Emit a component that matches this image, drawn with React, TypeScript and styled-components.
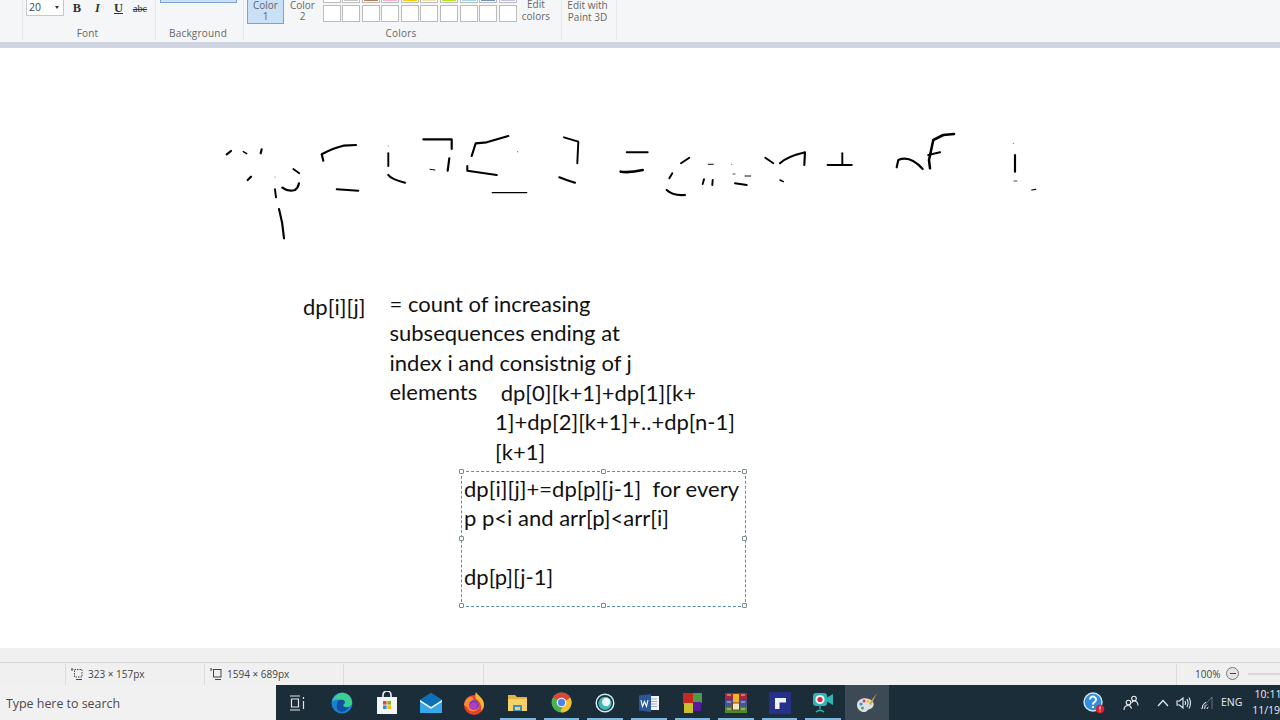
import React from "react";
import styled, { createGlobalStyle } from "styled-components";

const Global = createGlobalStyle`
  html, body { margin: 0; padding: 0; background: #fff; }
  #root { width: 1280px; height: 720px; overflow: hidden; }
`;

const Page = styled.div`
  width: 1280px; height: 720px; display: flex; flex-direction: column; overflow: hidden;
  font-family: "Open Sans", "Liberation Sans", sans-serif; color: #555;
`;

const Ribbon = styled.div`
  height: 42px; flex: none; background: #f5f6f7; display: flex; overflow: hidden; padding-left: 22px;
`;
const Group = styled.div<{ $w: number }>`
  width: ${p => p.$w}px; flex: none; height: 40px; border-left: 1px solid #e4e6e8; box-sizing: border-box;
  display: flex; flex-direction: column; justify-content: flex-end; align-items: stretch;
`;
const GroupBody = styled.div`
  display: flex; align-items: flex-start; height: 27px; overflow: hidden;
`;
const GroupLabel = styled.div`
  height: 13px; line-height: 13px; font-size: 10px; text-align: center; color: #666; letter-spacing: .2px; padding-right: 3px;
`;
const Combo = styled.div`
  width: 38px; height: 16px; margin-left: 3px; background: #fff; border: 1px solid #c6cad0; border-top: 0; box-sizing: border-box;
  font-size: 10.5px; line-height: 14px; padding-left: 2px; color: #444; display: flex; justify-content: space-between; padding-right: 4px;
`;
const Caret = styled.i`
  width: 0; height: 0; border: 2.5px solid transparent; border-top: 3px solid #333; border-bottom: 0; margin-top: 6px;
`;
const FontTools = styled.div`
  display: flex; height: 16px; align-items: center; margin-left: 3px;
`;
const FontBtn = styled.span<{ $w: number; $i?: boolean; $u?: boolean; $s?: boolean }>`
  width: ${p => p.$w}px; text-align: center; font-family: "Liberation Serif", serif; font-size: ${p => p.$s ? 10 : 12.5}px; color: #333;
  font-weight: ${p => p.$s ? 400 : 700}; font-style: ${p => p.$i ? "italic" : "normal"};
  text-decoration: ${p => p.$u ? "underline" : p.$s ? "line-through" : "none"};
`;
const BackgroundBar = styled.div`
  width: 77px; height: 3px; margin-left: 4px; background: #c9e0f7; border: 1px solid #7da2ce; border-top: 0; box-sizing: border-box;
`;
const ColorBtn = styled.div<{ $on?: boolean }>`
  width: 37px; height: 24px; box-sizing: border-box; text-align: center; font-size: 10px; line-height: 11px; color: #666;
  margin-left: ${p => p.$on ? 3 : 0}px;
  background: ${p => p.$on ? "#c9e0f7" : "transparent"}; border: 1px solid ${p => p.$on ? "#7da2ce" : "transparent"}; border-top: 0;
  flex: none;
`;
const Swatches = styled.div`
  display: grid; grid-template-columns: repeat(10, 18px); column-gap: 1.6px; row-gap: 2px; margin: -12px 0 0 1.5px; flex: none;
`;
const Swatch = styled.div<{ $c: string; $top?: boolean }>`
  width: 18px; height: ${p => p.$top ? 15 : 17}px; box-sizing: border-box; border: 1px solid #bcbcbc; background: #fff;
  box-shadow: inset 0 0 0 1px #fff; position: relative;
  &::after { content: ""; position: absolute; inset: 1px; background: ${p => p.$c}; }
`;
const EditBtn = styled.div`
  font-size: 10px; line-height: 12px; text-align: center; color: #666; flex: 1; margin-top: -1px; padding-right: 3px;
`;
const EditColors = styled(EditBtn)`
  padding-right: 6px; margin-top: -2px;
`;
const Band = styled.div`
  height: 6px; flex: none; background: #d0d5e2;
`;

const Canvas = styled.div`
  flex: none; height: 600px; background: #fff; position: relative; overflow: hidden;
`;
const Ink = styled.svg`
  position: absolute; left: 0; top: 0; width: 1280px; height: 600px;
`;
const TextBox = styled.div<{ $x: number; $y: number }>`
  position: absolute; left: ${p => p.$x}px; top: ${p => p.$y}px; white-space: pre;
  font-family: Lato, "Noto Sans", sans-serif; font-size: 22px; line-height: 29.4px; color: #111;
`;
const Selection = styled.div`
  position: absolute; left: 461px; top: 423px; width: 285px; height: 136px; box-sizing: border-box;
  border: 1px dashed #5b8db0;
`;
const Handle = styled.i<{ $l: number; $t: number }>`
  position: absolute; left: calc(${p => p.$l}% - 3px); top: calc(${p => p.$t}% - 3px); width: 5px; height: 5px;
  box-sizing: border-box; background: #fff; border: 1px solid #7b8a90; border-radius: 1px;
`;

const Gutter = styled.div`
  height: 14px; flex: none; background: #f0f0f0;
`;
const Status = styled.div`
  height: 23px; flex: none; background: #f0f0f0; border-top: 1px solid #d9d9d9; box-sizing: border-box; display: flex; align-items: stretch;
  font-size: 10px; color: #444;
`;
const Cell = styled.div<{ $w: number; $plain?: boolean }>`
  width: ${p => p.$w}px; flex: none; border-left: ${p => p.$plain ? "0" : "1px solid #dcdcdc"}; box-sizing: border-box; display: flex; align-items: center; gap: 5px; padding: 0 0 2px 5px; margin-top: 1px;
`;
const Zoom = styled.div`
  flex: 1; border-left: 1px solid #dcdcdc; display: flex; align-items: center; padding: 0 0 2px 18px; margin-top: 1px; overflow: hidden;
`;
const ZoomMinus = styled.i`
  width: 13px; height: 13px; margin-left: 6px; border-radius: 50%; border: 1px solid #777; box-sizing: border-box; background: #e4e4e4; position: relative; flex: none;
  &::after { content: ""; position: absolute; left: 2.5px; right: 2.5px; top: 5px; height: 1px; background: #444; }
`;
const Track = styled.i`
  width: 40px; height: 2px; margin-left: 9px; background: #d8d8d8; flex: none;
`;

const Taskbar = styled.div`
  height: 35px; flex: none; display: flex; background: #1c2d3a;
`;
const Search = styled.div`
  width: 276px; flex: none; background: #f1f1f1; color: #4a4a4a; font-size: 12.4px; line-height: 38px; padding-left: 6px; box-sizing: border-box;
`;
const Apps = styled.div`
  display: flex; flex: none;
`;
const AppSlot = styled.div<{ $w?: number; $on?: boolean; $active?: boolean }>`
  width: ${p => p.$w ?? 43.64}px; height: 35px; flex: none; display: flex; align-items: center; justify-content: center; position: relative;
  background: ${p => p.$active ? "#3c4a55" : "transparent"};
  ${p => p.$on ? `&::after { content: ""; position: absolute; left: 4px; right: 4px; bottom: 0; height: 2px; background: #7fb8de; }` : ""}
  svg { display: block; }
`;
const Tray = styled.div`
  margin-left: auto; color: #e8edf0; position: relative; width: 201px; flex: none; overflow: hidden;
`;
const TrayIcon = styled.div<{ $x: number }>`
  position: absolute; left: ${p => p.$x}px; top: 50%; transform: translate(-50%, -50%); display: flex;
`;
const Lang = styled.span`
  position: absolute; left: 142px; top: 11px; font-size: 10.5px; line-height: 13px;
`;
const Clock = styled.div`
  position: absolute; left: 173px; top: 1px; width: 32px; text-align: center; font-size: 10.5px; line-height: 16px; white-space: pre;
`;

const strokes: [string, number][] = [
  ["M226.7 154.3L231 151", 1.8], ["M243.3 151.7L246.7 153.7", 1.2], ["M261.7 149.3L260.7 153.3", 1.8], ["M247.7 180L251 176.7", 1.8],
  ["M293.3 169L299.3 173.3", 1.4], ["M282.3 187.7Q288 192 295 190Q298 188 299 183.3", 1.8], ["M275 189.3L276 197.3", 1.6],
  ["M279 209Q283 223 284 238.3", 1.8],
  ["M323.3 160.7L321.7 154.3Q333 148 343.3 145.7L356 145", 1.8], ["M336.7 189.3L358.3 190.7", 1.6],
  ["M388.3 153.3V166", 1.6], ["M388.3 175Q391 179 405 182.7", 1.8],
  ["M423.3 139.3H451.7V149", 1.8], ["M449.3 158.3L447.7 170.7", 1.8], ["M430 169.3L435 170", 0.8],
  ["M471.7 156L475.7 143.3L486.7 142.3L508.3 136", 1.8], ["M467.3 166V170.7L496.7 175", 1.7], ["M492.3 192.7H526.7", 1.1],
  ["M564 137.3L578.3 141.7L577.3 163.3", 1.6], ["M559.3 177.3L567.3 180.3L575 182.7", 1.8],
  ["M626.7 152.3H647.7", 1.6], ["M620.7 171.7Q630 173 642.7 170", 2.2],
  ["M681 163.3L689.3 157.7", 1.6], ["M669.3 178.3L672.3 173.3", 1.6], ["M666.7 190Q673 196 685 195", 1.8],
  ["M708.3 164.3H713.3", 0.8], ["M704 179.3L702.7 184", 1.6], ["M712.7 180L712.3 185", 1.6],
  ["M735 183.3L746.7 185", 1.6], ["M745 176H750.7", 0.8], ["M733 174H735", 0.6], ["M765.3 157.7L773.3 163.3", 1.6],
  ["M780 163.3Q786 157 805 152.3L804.3 165", 1.8], ["M780 180L783.3 181.7", 1.2],
  ["M827.7 165H851.7", 1.8], ["M842.3 153.3V165", 1.6],
  ["M896.7 167.3L898.3 160Q910 155 922.7 169", 1.8],
  ["M954 134L943.3 135L933.3 140L929 160L930 168.3", 2.1], ["M928.3 155L940 152.3", 1.8],
  ["M1015 155V171.7", 1.8], ["M1014 181H1017", 0.6], ["M1031.7 190L1035.7 189.3", 1],
];
const dots: [number, number][] = [[388.3, 98], [275, 129], [517.7, 103.7], [731.7, 116.3], [1013.3, 95.3]];

const topColors = ["#ffffff", "#c3c3c3", "#b97a57", "#ffaec9", "#ffc90e", "#efe4b0", "#b5e61d", "#99d9ea", "#7092be", "#c8bfe7"];

const Logo = {
  TaskView: () => (
    <svg width="18" height="16" viewBox="0 0 18 16" fill="none" stroke="#dfe5ea" strokeWidth="1.2">
      <path d="M1 1h10M1 15h10M2.5 4h7v8h-7z" /><path d="M14.5 2v2M14.5 6v8" />
    </svg>
  ),
  Edge: () => (
    <svg width="22" height="22" viewBox="0 0 22 22">
      <circle cx="11" cy="11" r="10.5" fill="#1b7fd4" />
      <path d="M1 10C3 3 9 0 13 1c5 1 8 5 8 10 0 2-2 4-5 4-3 0-4-1-4-2 2-1 2-4-1-5C7 7 3 7 1 10z" fill="#3ccf91" />
      <path d="M6 12c0-3 3-5 6-4 3 1 2 4 0 5 0 2 3 3 6 2-2 4-7 6-10 4-2-1-3-4-2-7z" fill="#0f4f9c" />
    </svg>
  ),
  Store: () => (
    <svg width="22" height="24" viewBox="0 0 22 24">
      <path d="M7 6V4a4 4 0 0 1 8 0v2" fill="none" stroke="#eef1f3" strokeWidth="1.6" />
      <path d="M1 6h20v17H1z" fill="#f2f4f5" />
      <rect x="7" y="10" width="3.6" height="3.6" fill="#e6492d" /><rect x="11.4" y="10" width="3.6" height="3.6" fill="#7fba00" />
      <rect x="7" y="14.4" width="3.6" height="3.6" fill="#1f9be0" /><rect x="11.4" y="14.4" width="3.6" height="3.6" fill="#ffb900" />
    </svg>
  ),
  Mail: () => (
    <svg width="24" height="22" viewBox="0 0 24 22">
      <path d="M1 8L12 1l11 7v13H1z" fill="#2196df" />
      <path d="M1 8L12 1l11 7-11 7z" fill="#0f6fb5" />
      <path d="M1 8l11 7 11-7v2l-11 7-11-7z" fill="#f2f8fc" />
      <path d="M1 10l11 7 11-7v11H1z" fill="#35a8ea" />
    </svg>
  ),
  Firefox: () => (
    <svg width="22" height="24" viewBox="0 0 22 24">
      <circle cx="11" cy="14" r="10" fill="#e8402f" />
      <path d="M1 14C2 7 7 5 10 6c-1 3 2 3 4 4 3 2 3 7 0 9-4 3-9 1-10-3-1-1-2-1-3-2z" fill="#ff9a2b" opacity=".85" />
      <path d="M13 1c1 3 7 5 8 12 0 3-1 5-3 7 1-5-1-10-5-12-1-2-1-5 0-7z" fill="#ffb52e" />
      <circle cx="11" cy="14" r="5" fill="#7a3bc1" />
      <path d="M6 14c2-2 5-3 7-2 2 2 1 6-2 7-3 0-5-2-5-5z" fill="#b03fc4" />
    </svg>
  ),
  Explorer: () => (
    <svg width="21" height="18" viewBox="0 0 21 18">
      <path d="M1 1h7l2 2h10v14H1z" fill="#e0b43e" /><path d="M1 5h19v12H1z" fill="#f5d268" />
      <rect x="6" y="11" width="9" height="6" fill="#3d8fc4" /><rect x="8" y="13" width="5" height="3" fill="#f5d268" />
    </svg>
  ),
  Chrome: () => (
    <svg width="21" height="21" viewBox="-11 -11 22 22">
      <circle r="10.5" fill="#4caf50" />
      <path d="M-9.1-5.25A10.5 10.5 0 0 1 9.1-5.25L10.4-1H0z" fill="#d8473a" />
      <path d="M9.1-5.25A10.5 10.5 0 0 1 0 10.5L-1 9 5-2z" fill="#f2c233" />
      <circle r="5" fill="#fff" /><circle r="3.8" fill="#4a84e8" />
    </svg>
  ),
  Ring: () => (
    <svg width="20" height="20" viewBox="-10 -10 20 20">
      <circle r="8.8" fill="#10333f" stroke="#d7eef0" strokeWidth="1.5" />
      <circle r="6.6" cx="0" cy=".3" fill="#3fb6bb" />
      <circle r="4.2" cx="1.2" cy="-1" fill="#eaf7ee" />
    </svg>
  ),
  Word: () => (
    <svg width="20" height="18" viewBox="0 0 20 18">
      <rect x="10" y="2" width="10" height="14" fill="#f2f4f7" />
      <path d="M12 5h6M12 7.5h6M12 10h6M12 12.5h6" stroke="#9db1cf" strokeWidth="1" />
      <path d="M0 1.5L12 0v18L0 16.5z" fill="#2b579a" />
      <path d="M2 6l1.5 6.5L5.5 7.5l2 5L9 6" fill="none" stroke="#fff" strokeWidth="1.1" />
    </svg>
  ),
  Tiles: () => (
    <svg width="19" height="20" viewBox="0 0 19 20">
      <path d="M0 0h10v11H0z" fill="#c8281e" /><path d="M10 0h9v10h-9z" fill="#4f9b46" /><path d="M1 10h9v10H1z" fill="#c9c22e" /><path d="M10 9h8v9h-8z" fill="#5b1a9c" />
    </svg>
  ),
  Rar: () => (
    <svg width="22" height="20" viewBox="0 0 22 20">
      <rect width="22" height="6.5" fill="#a2283e" /><rect y="6.5" width="22" height="7" fill="#4b4fa8" /><rect y="13.5" width="22" height="6.5" fill="#4f8a33" />
      <path d="M2 2h4M16 2h4M2 9h4M16 9h4M2 16h4M16 16h4" stroke="#e6c9a0" strokeWidth="1.2" />
      <rect x="8" y="1" width="6" height="10" fill="#f0b429" /><rect x="7.5" y="10" width="7" height="7" fill="#f3e6c4" stroke="#6b3b1c" strokeWidth=".9" />
    </svg>
  ),
  Flash: () => (
    <svg width="22" height="22" viewBox="0 0 22 22">
      <rect width="22" height="22" rx="1" fill="#26318c" /><path d="M6 6h11v4.5H10.5V17H6z" fill="#f2f2f8" />
    </svg>
  ),
  Camera: () => (
    <svg width="22" height="21" viewBox="0 0 22 21">
      <rect x="1" y="1" width="14" height="13" rx="3" fill="#2fb6b2" /><path d="M15 5.5l6-3.5v11l-6-3.5z" fill="#2fb6b2" />
      <circle cx="8" cy="7.5" r="4.6" fill="#f4f4f4" /><circle cx="8" cy="7.5" r="2.6" fill="#d7263d" />
      <path d="M8 14v3M4 20q4-3.5 8 0" fill="none" stroke="#2fb6b2" strokeWidth="1.3" />
    </svg>
  ),
  Paint: () => (
    <svg width="22" height="22" viewBox="0 0 22 22">
      <path d="M1 13C1 7 8 5 13 7c5 2 6 6 3 9-3 2-4 1-5 3-2 2-6 1-8-1-1-1-2-3-2-5z" fill="#d9e0e6" />
      <circle cx="5" cy="12" r="1.6" fill="#3f8dd6" /><circle cx="8" cy="9" r="1.5" fill="#d8473a" /><circle cx="12" cy="9.5" r="1.4" fill="#f2c233" /><circle cx="6.5" cy="16" r="1.5" fill="#58a84b" />
      <path d="M21 1l-8 11 2 1z" fill="#d9a441" />
    </svg>
  ),
};

const SelectIcon = ({ solid }: { solid?: boolean }) => (
  <svg width="12" height="12" viewBox="0 0 12 12" fill="none" stroke="#444" strokeWidth="1">
    <path d="M1 3V0.5M0 1.5L1 .5l1 1" />
    <rect x="3.5" y="1.5" width="7.5" height="7.5" strokeDasharray={solid ? undefined : "1.5 1"} />
    <path d="M5 11.5h6" />
  </svg>
);

export default function App() {
  const handles: [number, number][] = [[0, 0], [50, 0], [100, 0], [0, 50], [100, 50], [0, 100], [50, 100], [100, 100]];
  return (
    <Page>
      <Global />
      <Ribbon>
        <Group $w={133}>
          <GroupBody>
            <Combo>20<Caret /></Combo>
            <FontTools>
              <FontBtn $w={20}>B</FontBtn>
              <FontBtn $w={21} $i>I</FontBtn>
              <FontBtn $w={21} $u>U</FontBtn>
              <FontBtn $w={22} $s>abc</FontBtn>
            </FontTools>
          </GroupBody>
          <GroupLabel>Font</GroupLabel>
        </Group>
        <Group $w={88}>
          <GroupBody><BackgroundBar /></GroupBody>
          <GroupLabel>Background</GroupLabel>
        </Group>
        <Group $w={318}>
          <GroupBody>
            <ColorBtn $on>Color<br />1</ColorBtn>
            <ColorBtn>Color<br />2</ColorBtn>
            <Swatches>
              {topColors.map(c => <Swatch key={c} $c={c} $top />)}
              {topColors.map(c => <Swatch key={c + "b"} $c="#fff" />)}
            </Swatches>
            <EditColors>Edit<br />colors</EditColors>
          </GroupBody>
          <GroupLabel>Colors</GroupLabel>
        </Group>
        <Group $w={55}>
          <GroupBody><EditBtn>Edit with<br />Paint 3D</EditBtn></GroupBody>
          <GroupLabel>&nbsp;</GroupLabel>
        </Group>
        <Group $w={10} />
      </Ribbon>
      <Band />
      <Canvas>
        <Ink viewBox="0 48 1280 600">
          {strokes.map(([d, w], i) => (
            <path key={i} d={d} fill="none" stroke="#000" strokeWidth={w * 1.2} strokeLinecap="round" strokeLinejoin="round" />
          ))}
          {dots.map(([x, y], i) => <circle key={i} cx={x} cy={y + 48} r=".6" fill="#666" />)}
        </Ink>
        <TextBox $x={303} $y={243.5}>dp[i][j]</TextBox>
        <TextBox $x={389.5} $y={241}>{"= count of increasing\nsubsequences ending at\nindex i and consistnig of j\nelements"}</TextBox>
        <TextBox $x={495} $y={330}>{" dp[0][k+1]+dp[1][k+\n1]+dp[2][k+1]+..+dp[n-1]\n[k+1]"}</TextBox>
        <TextBox $x={464} $y={426}>{"dp[i][j]+=dp[p][j-1]  for every\np p<i and arr[p]<arr[i]\n\ndp[p][j-1]"}</TextBox>
        <Selection>
          {handles.map(([l, t]) => <Handle key={`${l}-${t}`} $l={l} $t={t} />)}
        </Selection>
      </Canvas>
      <Gutter />
      <Status>
        <Cell $w={65} $plain />
        <Cell $w={139}><SelectIcon />323 × 157px</Cell>
        <Cell $w={139}><SelectIcon solid />1594 × 689px</Cell>
        <Cell $w={140} />
        <Cell $w={693} />
        <Zoom>100%<ZoomMinus /><Track /></Zoom>
      </Status>
      <Taskbar>
        <Search>Type here to search</Search>
        <Apps>
          <AppSlot $w={43}><Logo.TaskView /></AppSlot>
          <AppSlot $w={46.2}><Logo.Edge /></AppSlot>
          <AppSlot><Logo.Store /></AppSlot>
          <AppSlot><Logo.Mail /></AppSlot>
          <AppSlot><Logo.Firefox /></AppSlot>
          <AppSlot $on><Logo.Explorer /></AppSlot>
          <AppSlot $on><Logo.Chrome /></AppSlot>
          <AppSlot $on><Logo.Ring /></AppSlot>
          <AppSlot $on><Logo.Word /></AppSlot>
          <AppSlot $on><Logo.Tiles /></AppSlot>
          <AppSlot $on><Logo.Rar /></AppSlot>
          <AppSlot $on><Logo.Flash /></AppSlot>
          <AppSlot $on><Logo.Camera /></AppSlot>
          <AppSlot $active><Logo.Paint /></AppSlot>
        </Apps>
        <Tray>
          <TrayIcon $x={15}>
            <svg width="22" height="22" viewBox="0 0 22 22">
              <circle cx="10" cy="10" r="9" fill="#2f8fdc" stroke="#cfe8f8" strokeWidth="1.4" />
              <path d="M7 7.5a3 3 0 1 1 4.6 2.5c-1 .7-1.6 1.2-1.6 2.5M10 14v2" fill="none" stroke="#fff" strokeWidth="2" />
              <circle cx="17" cy="17" r="4.4" fill="#d9232e" /><path d="M17 14.5v3M17 18.8v.8" stroke="#fff" strokeWidth="1.2" />
            </svg>
          </TrayIcon>
          <TrayIcon $x={52}>
            <svg width="16" height="16" viewBox="0 0 16 16" fill="none" stroke="#e8edf0" strokeWidth="1.1">
              <circle cx="5.5" cy="7.5" r="2.3" /><path d="M1 15c0-3 2-4.5 4.5-4.5" /><path d="M5.5 10.5c1.5 0 2.5 1 3 3" />
              <circle cx="11" cy="3.5" r="2.3" /><path d="M8.5 8c.5-1 1.5-2 2.5-2 2.5 0 4 1.5 4 4.5" />
            </svg>
          </TrayIcon>
          <TrayIcon $x={84}>
            <svg width="12" height="8" viewBox="0 0 12 8" fill="none" stroke="#e8edf0" strokeWidth="1.2"><path d="M1 7l5-5.5L11 7" /></svg>
          </TrayIcon>
          <TrayIcon $x={105}>
            <svg width="16" height="14" viewBox="0 0 16 14" fill="none" stroke="#e8edf0" strokeWidth="1.1">
              <path d="M1 5v4h2.5L7 12V2L3.5 5z" /><path d="M9 5q1 2 0 4M11 3q2 4 0 8M13 1.5q3 5.5 0 11" />
            </svg>
          </TrayIcon>
          <TrayIcon $x={128}>
            <svg width="14" height="14" viewBox="0 0 14 14" fill="none" stroke="#e8edf0" strokeWidth="1">
              <path d="M1 13L12 1v12" opacity=".35" /><path d="M2 13q0-5 4-7M4.5 13q0-3 2.5-4.5M7 13q0-1.5 1.5-2" />
            </svg>
          </TrayIcon>
          <Lang>ENG</Lang>
          <Clock>{"10:11\n11/19/"}</Clock>
        </Tray>
      </Taskbar>
    </Page>
  );
}
